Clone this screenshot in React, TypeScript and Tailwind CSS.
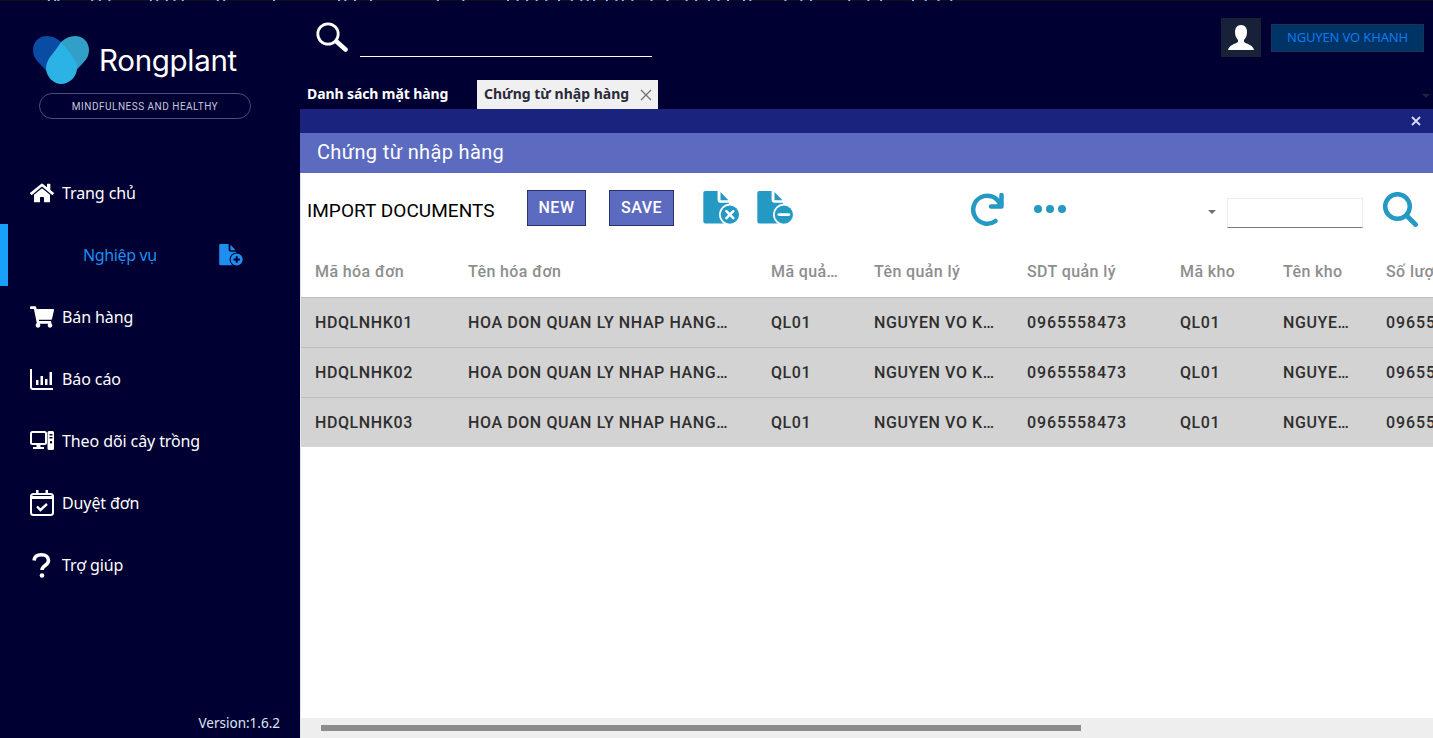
import React from "react";
import { FaHome, FaShoppingCart } from "react-icons/fa";

const sans = "font-['Noto_Sans','Open_Sans',sans-serif]";
const roboto = "font-['Roboto',sans-serif]";

function FileBadge({ size, color, hole, kind }: { size: number; color: string; hole: string; kind: "plus" | "x" | "minus" }) {
  return (
    <svg width={size} height={size * 0.88} viewBox="0 0 38 34" className="block shrink-0">
      <path d="M2 0h12.500v9a3 3 0 0 0 3 3H26v21H2a2 2 0 0 1-2-2V2a2 2 0 0 1 2-2z" fill={color} />
      <path d="M17.500 1l8 8.500h-8z" fill={color} />
      <circle cx="27" cy="24" r="11" fill={hole} />
      <circle cx="27" cy="24" r="9.300" fill={color} />
      {kind === "plus" && <path d="M27 19v10M22 24h10" stroke={hole} strokeWidth="3" />}
      {kind === "minus" && <path d="M22 24h10" stroke={hole} strokeWidth="3" strokeLinecap="round" />}
      {kind === "x" && <path d="M23.500 20.500l7 7M30.500 20.500l-7 7" stroke={hole} strokeWidth="2.600" strokeLinecap="round" />}
    </svg>
  );
}

const ChartIcon = () => (
  <svg width="24" height="21" viewBox="0 0 24 21" fill="none" className="block">
    <path d="M1 0v18a2 2 0 0 0 2 2h20" stroke="#fff" strokeWidth="2" />
    <path d="M6 11h2.500v5H6zM10.500 7H13v9h-2.500zM15 10h2.500v6H15zM19.500 3H22v13h-2.500z" fill="#fff" />
  </svg>
);
const PcIcon = () => (
  <svg width="24" height="20" viewBox="0 0 24 20" fill="none" className="block">
    <rect x="1" y="1" width="15" height="12" rx="1.500" stroke="#fff" strokeWidth="2" />
    <path d="M6.500 14h4v3h-4zM3 16h11v2H3z" fill="#fff" />
    <path fillRule="evenodd" d="M19 0h3.500a1.500 1.500 0 0 1 1.500 1.500v16a1.500 1.500 0 0 1-1.500 1.500H19a1.500 1.500 0 0 1-1.500-1.500v-16A1.500 1.500 0 0 1 19 0zm.5 3v1.500h3V3zm0 3v1.500h3V6zm1.500 4a1.200 1.200 0 1 0 0 2.400 1.200 1.200 0 0 0 0-2.400z" fill="#fff" />
  </svg>
);
const CalIcon = () => (
  <svg width="24" height="26" viewBox="0 0 24 26" fill="none" className="block">
    <rect x="1" y="4" width="22" height="21" rx="2.500" stroke="#fff" strokeWidth="2" />
    <path d="M1 6h22v3H1z" fill="#fff" />
    <path d="M6 0h2.500v5H6zM15.500 0H18v5h-2.500z" fill="#fff" />
    <path d="M7 16.500l3.500 3.500 6.500-6" stroke="#fff" strokeWidth="2.400" />
  </svg>
);
const HelpIcon = () => (
  <svg width="24" height="25" viewBox="0 0 24 25" fill="none" className="block">
    <path d="M4 7.500C4.500 3.500 7.500 1.800 11.500 1.800c4.500 0 7 2.400 7 5.700 0 5-6.500 5-6.500 9.500" stroke="#fff" strokeWidth="3.600" />
    <circle cx="12" cy="22.500" r="2.300" fill="#fff" />
  </svg>
);

const specks = [75, 85, 90, 143, 155, 170, 235, 245, 260, 272, 285, 340, 350, 428, 530, 540, 555, 580, 685, 725, 795, 810, 825, 840, 855, 875, 895, 910, 920, 930, 950, 965, 975, 990, 1020, 1045, 1075, 1090, 1110, 1125, 1140, 1165, 1175, 1230, 1255, 1270, 1330, 1360, 1380, 1430, 1450, 1470, 1490];

const menu: { label: string; icon: React.ReactNode }[] = [
  { label: "Trang chủ", icon: <FaHome size={26} color="#fff" /> },
  { label: "Nghiệp vụ", icon: null },
  { label: "Bán hàng", icon: <FaShoppingCart size={24} color="#fff" /> },
  { label: "Báo cáo", icon: <ChartIcon /> },
  { label: "Theo dõi cây trồng", icon: <PcIcon /> },
  { label: "Duyệt đơn", icon: <CalIcon /> },
  { label: "Trợ giúp", icon: <HelpIcon /> },
];

const columns = ["Mã hóa đơn", "Tên hóa đơn", "Mã quản lý", "Tên quản lý", "SDT quản lý", "Mã kho", "Tên kho", "Số lượng"];
const rows = ["01", "02", "03"].map((n) => [
  `HDQLNHK${n}`,
  "HOA DON QUAN LY NHAP HANG…",
  "QL01",
  "NGUYEN VO KHANH",
  "0965558473",
  "QL01",
  "NGUYEN VO KHANH",
  "0965558473",
]);
const gridCols = "grid grid-cols-[153px_303px_103px_153px_153px_103px_103px_153px] w-[1324px]";

export default function App() {
  return (
    <div className="flex flex-col w-[1433px] h-[738px] overflow-hidden bg-[#000033]">
      <svg width="1433" height="1" className="block shrink-0 bg-[#101014]">
        {specks.map((x) => (
          <rect key={x} x={x / 1.568} y="0" width="2" height="1" fill="#7cc4ff" />
        ))}
      </svg>
      <div className="flex flex-1 min-h-0">
        <aside className={`w-[300px] shrink-0 flex flex-col bg-[#000033] text-white ${sans}`}>
          <div className="h-[161px] shrink-0 pt-[35px] pl-[33px] flex flex-col">
            <div className="flex items-center h-[49px]">
              <svg width="56" height="49" viewBox="0 0 56 49" className="block shrink-0">
                <path d="M28 6C24 2 19 0 14 0 6 0 0 6 0 14c0 5 2 9 6 13l18 19z" fill="#0a4ba3" />
                <path d="M28 6c4-4 9-6 14-6 8 0 14 6 14 14 0 5-2 9-6 13L32 46z" fill="#319fc7" />
                <path d="M28 6c3 4 8 9 11 14 3 4 5 8 5 12 0 9-8 16-16 16-7 0-15-7-15-16 0-4 2-8 4-11 4-5 8-10 11-15z" fill="#2bb3e6" />
              </svg>
              <span className="ml-[10px] font-['Inter',sans-serif] text-[29.500px] leading-none font-normal tracking-[-0.3px] text-white">Rongplant</span>
            </div>
            <div className="mt-[8px] ml-[6px] w-[212px] h-[26px] pt-[1px] rounded-full border border-[#4e4e78] flex items-center justify-center text-[10px] tracking-[0.5px] text-[#c6c6dc] font-['Roboto',sans-serif]">
              MINDFULNESS AND HEALTHY
            </div>
          </div>
          <nav className="flex flex-col">
            {menu.map((m) =>
              m.icon ? (
                <div key={m.label} className="h-[62px] flex items-center pl-[30px] text-[16px] tracking-[-0.1px]">
                  <span className="w-[24px] flex justify-center shrink-0">{m.icon}</span>
                  <span className="ml-[8px]">{m.label}</span>
                </div>
              ) : (
                <div key={m.label} className="h-[62px] flex items-center border-l-[8px] border-[#18a0fb] text-[16px] tracking-[-0.35px] text-[#1e8fef]">
                  <span className="ml-[75px] w-[136px]">{m.label}</span>
                  <FileBadge size={25} color="#1e8fef" hole="#000033" kind="plus" />
                </div>
              )
            )}
          </nav>
          <div className="mt-auto pr-[20px] pb-[5px] text-right text-[13.500px] text-[#dfe6f2]">Version:1.6.2</div>
        </aside>

        <main className="flex-1 min-w-0 flex flex-col">
          <header className="h-[79px] shrink-0 flex items-start">
            <svg width="32" height="31" viewBox="0 0 32 31" fill="none" className="ml-[16px] mt-[21px] block shrink-0">
              <circle cx="12" cy="12" r="10.200" stroke="#fff" strokeWidth="2.800" />
              <path d="M20.500 19.500L29.500 27.500" stroke="#fff" strokeWidth="4.500" strokeLinecap="round" />
            </svg>
            <div className="ml-[12px] mt-[55px] w-[292px] h-px bg-white" />
            <div className="ml-auto mt-[17px] w-[40px] h-[39px] bg-[#172238] flex items-center justify-center">
              <svg width="26" height="25" viewBox="0 0 26 25" className="block">
                <path d="M13 0c4 0 6 3 6 7 0 3-1 6-3 8v2c3 2 9 3 10 8H0c1-5 7-6 10-8v-2c-2-2-3-5-3-8 0-4 2-7 6-7z" fill="#fff" />
              </svg>
            </div>
            <div className={`ml-[10px] mr-[9px] mt-[23px] w-[153px] h-[28px] bg-[#003366] border border-[#1b3453] flex items-center justify-center text-[13px] tracking-[-0.15px] text-[#0a7bea] ${sans}`}>
              NGUYEN VO KHANH
            </div>
          </header>

          <div className={`h-[29px] shrink-0 flex items-stretch text-[14px] font-bold ${sans}`}>
            <div className="pl-[7px] pb-[2px] w-[177px] flex items-center text-white tracking-[-0.1px]">Danh sách mặt hàng</div>
            <div className="w-[181px] pl-[7px] pb-[2px] flex items-center bg-[#f0f0f0] text-[#2a2a3a]">
              <span>Chứng từ nhập hàng</span>
              <svg width="12" height="12" viewBox="0 0 12 12" className="ml-auto mr-[6px] mt-[2px] block">
                <path d="M1 1l10 10M11 1L1 11" stroke="#707070" strokeWidth="1.200" />
              </svg>
            </div>
            <div className="ml-auto mr-[3px] self-center mt-[2px] w-0 h-0 border-x-[4px] border-x-transparent border-t-[4px] border-t-[#22223f]" />
          </div>

          <div className="h-[24px] shrink-0 bg-[#1a237e] flex items-center justify-end pr-[12px]">
            <svg width="10" height="10" viewBox="0 0 10 10" className="block">
              <path d="M1 1l8 8M9 1L1 9" stroke="#d8dcf5" strokeWidth="1.800" />
            </svg>
          </div>
          <div className={`h-[40px] shrink-0 bg-[#5c6bc0] flex items-center pl-[17px] pb-[2px] text-[20px] tracking-[0.35px] text-white ${roboto}`}>Chứng từ nhập hàng</div>

          <section className={`flex-1 min-h-0 flex flex-col bg-white border-l border-[#e4e4e4] ${roboto}`}>
            <div className="h-[74px] shrink-0 flex items-center pl-[6px] pb-[4px]">
              <span className="w-[220px] text-[19px] tracking-[0.05px] text-black leading-none mt-[5px]">IMPORT DOCUMENTS</span>
              <button className="w-[59px] h-[36px] bg-[#5c6bc0] border border-[#2b3270] text-white text-[16px] tracking-[0.5px] font-medium pb-[1px]">NEW</button>
              <button className="ml-[23px] w-[65px] h-[36px] bg-[#5c6bc0] border border-[#2b3270] text-white text-[16px] tracking-[0.5px] font-medium pb-[1px]">SAVE</button>
              <div className="ml-[29px]"><FileBadge size={38} color="#2499c3" hole="#fff" kind="x" /></div>
              <div className="ml-[16px]"><FileBadge size={38} color="#2499c3" hole="#fff" kind="minus" /></div>
              <svg width="34" height="33" viewBox="0 0 34 33" fill="none" className="ml-[176px] mt-[2px] block shrink-0">
                <path d="M24.500 28A14 14 0 1 1 29 11" stroke="#2499c3" strokeWidth="4.500" strokeLinecap="round" />
                <path d="M30.500 2v11.500H20" stroke="#2499c3" strokeWidth="4.500" strokeLinecap="round" strokeLinejoin="round" />
              </svg>
              <div className="ml-[29px] mt-[2px] flex items-center gap-[4px]">
                <span className="w-[8px] h-[8px] rounded-full bg-[#2499c3]" />
                <span className="w-[8px] h-[8px] rounded-full bg-[#2499c3]" />
                <span className="w-[8px] h-[8px] rounded-full bg-[#2499c3]" />
              </div>
              <div className="ml-[142px] mt-[8px] w-0 h-0 border-x-[4px] border-x-transparent border-t-[4px] border-t-[#707070]" />
              <div className="ml-[11px] mt-[9px] w-[136px] h-[30px] bg-white border border-[#ececec] border-b-[#7a7a7a]" />
              <svg width="35" height="35" viewBox="0 0 35 35" fill="none" className="ml-[20px] mt-[3px] block shrink-0">
                <circle cx="14.500" cy="14.500" r="12.300" stroke="#2499c3" strokeWidth="4.500" />
                <path d="M24 24L32.500 32.500" stroke="#2499c3" strokeWidth="4.800" strokeLinecap="round" />
              </svg>
            </div>

            <div className="flex-1 min-h-0 overflow-hidden flex flex-col">
              <div className={`${gridCols} h-[51px] shrink-0 items-center border-b border-[#bdbdbd] pb-[1px] text-[16px] tracking-[0.4px] font-medium text-[#8e8e8e]`}>
                {columns.map((c) => (
                  <div key={c} className="pl-[14px] pr-[17px] truncate">{c}</div>
                ))}
              </div>
              {rows.map((r, ri) => (
                <div key={r[0]} className={`${gridCols} shrink-0 items-center bg-[#d3d3d3] text-[16px] font-medium text-[#2f2f2f] ${ri < 2 ? "h-[50px] border-b border-[#bdbdbd]" : "h-[49px]"}`}>
                  {r.map((c, i) => (
                    <div key={i} className={`pl-[14px] pr-[17px] truncate ${i === 4 || i === 7 ? "tracking-[0.9px]" : "tracking-[0.6px]"}`}>{c}</div>
                  ))}
                </div>
              ))}
            </div>

            <div className="h-[20px] shrink-0 bg-[#eeeeee] flex items-center pl-[20px]">
              <div className="w-[760px] h-[6px] bg-[#8c8c8c]" />
            </div>
          </section>
        </main>
      </div>
    </div>
  );
}
